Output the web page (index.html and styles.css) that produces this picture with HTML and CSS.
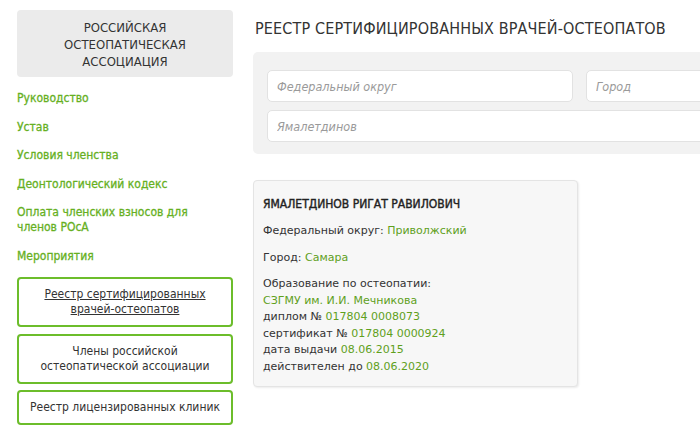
FILE: index.html
```html
<!DOCTYPE html>
<html lang="ru">
<head>
<meta charset="utf-8">
<title>Реестр сертифицированных врачей-остеопатов</title>
<link rel="stylesheet" href="styles.css">
</head>
<body>
<div class="page">
  <aside class="sidebar">
    <div class="logo">РОССИЙСКАЯ<br>ОСТЕОПАТИЧЕСКАЯ<br>АССОЦИАЦИЯ</div>
    <nav class="nav">
      <a href="#">Руководство</a>
      <a href="#">Устав</a>
      <a href="#">Условия членства</a>
      <a href="#">Деонтологический кодекс</a>
      <a href="#">Оплата членских взносов для<br>членов РОсА</a>
      <a href="#">Мероприятия</a>
    </nav>
    <div class="buttons">
      <a href="#" class="btn btn-active">Реестр сертифицированных<br>врачей-остеопатов</a>
      <a href="#" class="btn">Члены российской<br>остеопатической ассоциации</a>
      <a href="#" class="btn">Реестр лицензированных клиник</a>
    </div>
  </aside>
  <main class="main">
    <h1 class="title">РЕЕСТР СЕРТИФИЦИРОВАННЫХ ВРАЧЕЙ-ОСТЕОПАТОВ</h1>
    <div class="filters">
      <div class="row">
        <input class="field field-district" type="text" placeholder="Федеральный округ">
        <input class="field field-city" type="text" placeholder="Город">
      </div>
      <div class="row">
        <input class="field field-name" type="text" placeholder="Ямалетдинов">
      </div>
    </div>
    <div class="card">
      <div class="name">ЯМАЛЕТДИНОВ РИГАТ РАВИЛОВИЧ</div>
      <p>Федеральный округ: <span class="val">Приволжский</span></p>
      <p>Город: <span class="val">Самара</span></p>
      <p class="edu">Образование по остеопатии:<br>
        <span class="val">СЗГМУ им. И.И. Мечникова</span><br>
        диплом № <span class="val">017804 0008073</span><br>
        сертификат № <span class="val">017804 0000924</span><br>
        дата выдачи <span class="val">08.06.2015</span><br>
        действителен до <span class="val">08.06.2020</span></p>
    </div>
  </main>
</div>
</body>
</html>
```
FILE: styles.css
```css
html, body {
  margin: 0;
  padding: 0;
  background: #fff;
  overflow: hidden;
}
body {
  font-family: "DejaVu Sans Condensed", "DejaVu Sans", sans-serif;
  font-stretch: condensed;
  color: #333;
}
.page {
  display: flex;
  align-items: flex-start;
  padding-left: 17px;
}
.sidebar {
  width: 216px;
  flex: none;
}
.logo {
  margin-top: 10px;
  height: 67px;
  box-sizing: border-box;
  padding-top: 9px;
  background: #ebebeb;
  border-radius: 4px;
  text-align: center;
  font-size: 13px;
  line-height: 17px;
  color: #333;
}
.nav {
  display: flex;
  flex-direction: column;
  gap: 13.5px;
  margin-top: 14px;
}
.nav a {
  color: #66b01f;
  text-decoration: none;
  font-size: 12px;
  line-height: 15px;
  -webkit-text-stroke: 0.3px #66b01f;
}
.buttons {
  display: flex;
  flex-direction: column;
  gap: 6.5px;
  margin-top: 13.5px;
}
.btn {
  display: block;
  border: 2px solid #6cbd2b;
  border-radius: 4px;
  padding: 8px 4px;
  text-align: center;
  color: #333;
  text-decoration: none;
  font-size: 12px;
  line-height: 15px;
  white-space: nowrap;
}
.btn-active {
  text-decoration: underline;
}
.main {
  margin-left: 20px;
  width: 480px;
  flex: none;
}
.title {
  margin: 18px 0 0 2px;
  font-size: 16px;
  line-height: 21px;
  font-weight: normal;
  letter-spacing: 0.15px;
  white-space: nowrap;
  color: #333;
}
.filters {
  margin-top: 13px;
  background: #f2f2f2;
  border-radius: 5px;
  padding: 18px 0 12px 14px;
  display: flex;
  flex-direction: column;
  gap: 8px;
}
.row {
  display: flex;
  gap: 13px;
}
.field {
  height: 32px;
  min-width: 0;
  box-sizing: border-box;
  border: 1px solid #e2e2e2;
  border-radius: 5px;
  background: #fff;
  padding: 0 9px;
  font-family: "DejaVu Sans Condensed", "DejaVu Sans", sans-serif;
  font-style: italic;
  font-size: 12.5px;
  color: #333;
  outline: none;
}
.field::placeholder {
  color: #9a9a9a;
}
.field-district { width: 306px; flex: none; }
.field-city { flex: 1 1 0; }
.field-name { flex: 1 1 0; }
.card {
  margin-top: 26px;
  width: 325px;
  box-sizing: border-box;
  background: #f7f7f7;
  border: 1px solid #e4e4e4;
  border-radius: 4px;
  box-shadow: 1px 1px 2px rgba(0,0,0,0.08);
  padding: 15px 10px 10px 9px;
}
.name {
  font-size: 12px;
  line-height: 16px;
  margin-bottom: 1px;
  color: #222;
  -webkit-text-stroke: 0.4px #222;
}
.card p {
  margin: 10px 0 0;
  font-family: "DejaVu Sans", Verdana, sans-serif;
  font-stretch: normal;
  font-size: 11px;
  line-height: 17px;
  color: #333;
}
.card p.edu {
  line-height: 16.6px;
}
.val {
  color: #5fa01c;
}
```
